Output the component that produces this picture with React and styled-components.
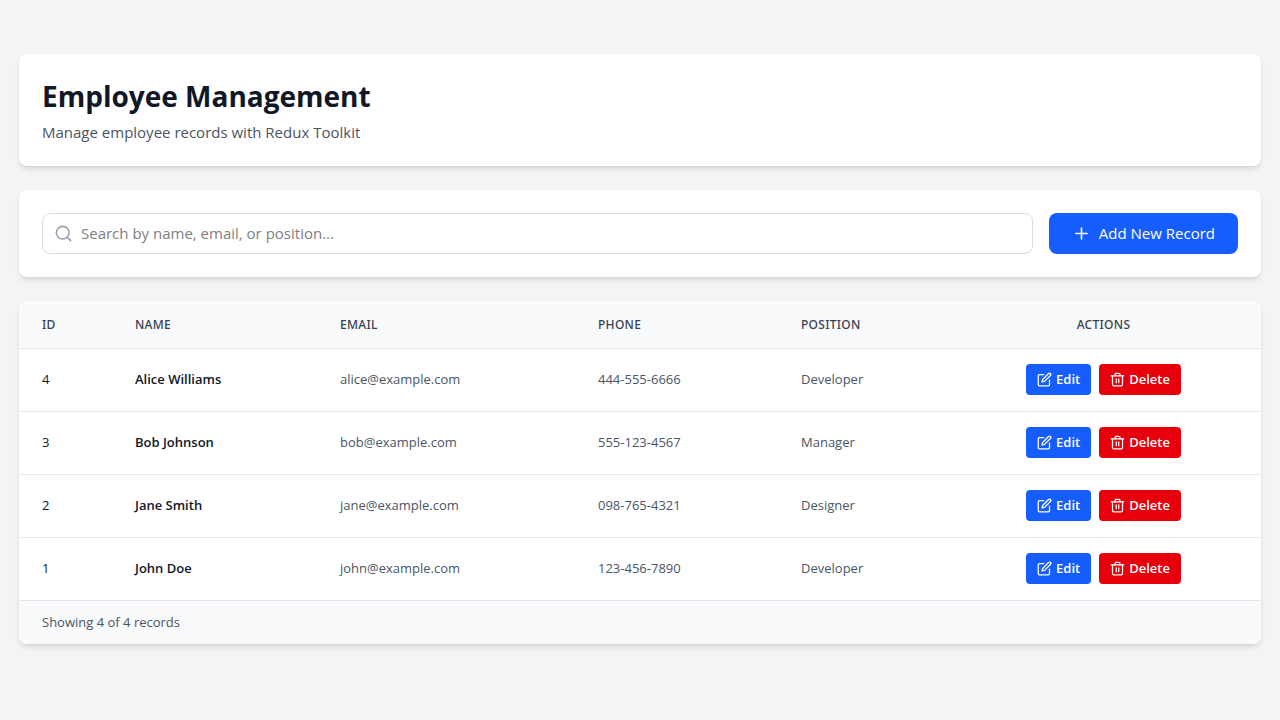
import React, { useState } from 'react';
import styled, { createGlobalStyle } from 'styled-components';

const colors = {
    page: '#f3f4f6',
    card: '#ffffff',
    soft: '#f9fafb',
    line: '#e5e7eb',
    inputLine: '#d9dce1',
    heading: '#101828',
    label: '#364153',
    text: '#4a5565',
    muted: '#99a1af',
    blue: '#155dfc',
    red: '#e7000b',
};

const GlobalStyle = createGlobalStyle`
    *, *::before, *::after {
        box-sizing: border-box;
    }

    body {
        margin: 0;
        background: ${colors.page};
        font-family: 'Open Sans', 'Noto Sans', sans-serif;
        font-size: 13px;
        line-height: 19px;
        color: ${colors.text};
    }

    button, input {
        font-family: inherit;
    }
`;

const Page = styled.main`
    display: flex;
    flex-direction: column;
    gap: 24px;
    min-height: 100vh;
    padding: 54px 19px;
`;

const Card = styled.section`
    background: ${colors.card};
    border-radius: 8px;
    box-shadow: 0 4px 6px -1px rgba(0, 0, 0, 0.1), 0 2px 4px -2px rgba(0, 0, 0, 0.1);
`;

const HeaderCard = styled(Card)`
    padding: 23px;
`;

const Title = styled.h1`
    margin: 0 0 6px;
    font-size: 28px;
    line-height: 39px;
    font-weight: 700;
    color: ${colors.heading};
`;

const Subtitle = styled.p`
    margin: 0;
    font-size: 15px;
    line-height: 21px;
`;

const Toolbar = styled(Card)`
    display: flex;
    gap: 16px;
    padding: 23px;
`;

const SearchBox = styled.label`
    display: flex;
    flex: 1;
    align-items: center;
    gap: 8px;
    height: 41px;
    padding: 0 11px;
    border: 1px solid ${colors.inputLine};
    border-radius: 8px;
    color: ${colors.muted};
`;

const SearchInput = styled.input`
    flex: 1;
    min-width: 0;
    padding: 0;
    border: 0;
    outline: 0;
    background: transparent;
    font-size: 15px;
    line-height: 21px;
    color: ${colors.heading};

    &::placeholder {
        color: #808080;
        opacity: 1;
    }
`;

const AddButton = styled.button`
    display: flex;
    align-items: center;
    gap: 8px;
    height: 41px;
    padding: 0 23px;
    border: 0;
    border-radius: 8px;
    background: ${colors.blue};
    color: #ffffff;
    font-size: 15px;
    line-height: 21px;
    white-space: nowrap;
    cursor: pointer;
`;

const TableCard = styled(Card)`
    overflow: hidden;
`;

const Table = styled.table`
    width: 100%;
    table-layout: fixed;
    border-collapse: collapse;
`;

const Column = styled.col`
    width: ${({ $width }) => $width}px;
`;

const HeadCell = styled.th`
    height: 47px;
    padding: 0 23px;
    background: ${colors.soft};
    font-family: 'Noto Sans', sans-serif;
    font-size: 12px;
    line-height: 17px;
    font-weight: 500;
    letter-spacing: 0.025em;
    text-align: ${({ $center }) => ($center ? 'center' : 'left')};
    text-transform: uppercase;
    color: ${colors.label};
`;

const Row = styled.tr`
    border-top: 1px solid ${colors.line};
`;

const Cell = styled.td`
    height: 63px;
    padding: 0 23px;
    font-weight: ${({ $strong }) => ($strong ? 600 : 400)};
    color: ${({ $dark }) => ($dark ? colors.heading : colors.text)};
    white-space: nowrap;
`;

const Actions = styled.div`
    display: flex;
    justify-content: center;
    gap: 8px;
`;

const ActionButton = styled.button`
    display: flex;
    align-items: center;
    gap: 4px;
    height: 31px;
    padding: 0 11px;
    border: 0;
    border-radius: 4px;
    background: ${({ $color }) => $color};
    color: #ffffff;
    font-size: 13px;
    line-height: 19px;
    font-weight: 600;
    cursor: pointer;
`;

const TableFooter = styled.footer`
    padding: 12px 23px;
    border-top: 1px solid ${colors.line};
    background: ${colors.soft};
`;

const Icon = styled.svg.attrs({
    viewBox: '0 0 24 24',
    fill: 'none',
    stroke: 'currentColor',
    strokeWidth: 2,
    strokeLinecap: 'round',
    strokeLinejoin: 'round',
    'aria-hidden': true,
})`
    flex: none;
    width: ${({ $size }) => $size}px;
    height: ${({ $size }) => $size}px;
`;

const SearchIcon = () => (
    <Icon $size={19}>
        <circle cx='11' cy='11' r='8' />
        <path d='m21 21-4.350-4.350' />
    </Icon>
);

const PlusIcon = () => (
    <Icon $size={19}>
        <path d='M12 5v14M5 12h14' />
    </Icon>
);

const EditIcon = () => (
    <Icon $size={15}>
        <path d='M11 4H4a2 2 0 0 0-2 2v14a2 2 0 0 0 2 2h14a2 2 0 0 0 2-2v-7' />
        <path d='M18.5 2.5a2.121 2.121 0 0 1 3 3L12 15l-4 1 1-4z' />
    </Icon>
);

const TrashIcon = () => (
    <Icon $size={15}>
        <path d='M2 6h20' />
        <path d='M20 6v14a2 2 0 0 1-2 2H6a2 2 0 0 1-2-2V6' />
        <path d='M8 6V4a2 2 0 0 1 2-2h4a2 2 0 0 1 2 2v2' />
        <path d='M10 11v6M14 11v6' />
    </Icon>
);

const columnWidths = [93, 205, 258, 203, 168, 315];

const initialEmployees = [
    { id: 4, name: 'Alice Williams', email: 'alice@example.com', phone: '444-555-6666', position: 'Developer' },
    { id: 3, name: 'Bob Johnson', email: 'bob@example.com', phone: '555-123-4567', position: 'Manager' },
    { id: 2, name: 'Jane Smith', email: 'jane@example.com', phone: '098-765-4321', position: 'Designer' },
    { id: 1, name: 'John Doe', email: 'john@example.com', phone: '123-456-7890', position: 'Developer' },
];

function EmployeeRow({ employee, onDelete }) {
    const { id, name, email, phone, position } = employee;

    return (
        <Row>
            <Cell $dark>{id}</Cell>
            <Cell $dark $strong>{name}</Cell>
            <Cell>{email}</Cell>
            <Cell>{phone}</Cell>
            <Cell>{position}</Cell>
            <Cell>
                <Actions>
                    <ActionButton type='button' $color={colors.blue}>
                        <EditIcon />
                        Edit
                    </ActionButton>
                    <ActionButton type='button' $color={colors.red} onClick={() => onDelete(id)}>
                        <TrashIcon />
                        Delete
                    </ActionButton>
                </Actions>
            </Cell>
        </Row>
    );
}

function App() {
    const [employees, setEmployees] = useState(initialEmployees);
    const [search, setSearch] = useState('');

    const handleSearch = (event) => {
        setSearch(event.target.value);
    };

    const handleDelete = (id) => {
        setEmployees(employees.filter((employee) => employee.id !== id));
    };

    const visible = employees.filter(({ name, email, position }) =>
        [name, email, position].some((value) => value.toLowerCase().includes(search.toLowerCase()))
    );

    return (
        <>
            <GlobalStyle />
            <Page>
                <HeaderCard as='header'>
                    <Title>Employee Management</Title>
                    <Subtitle>Manage employee records with Redux Toolkit</Subtitle>
                </HeaderCard>
                <Toolbar>
                    <SearchBox htmlFor='search'>
                        <SearchIcon />
                        <SearchInput
                            id='search'
                            type='text'
                            aria-label='Search'
                            placeholder='Search by name, email, or position...'
                            value={search}
                            onChange={handleSearch}
                        />
                    </SearchBox>
                    <AddButton type='button'>
                        <PlusIcon />
                        Add New Record
                    </AddButton>
                </Toolbar>
                <TableCard>
                    <Table>
                        <colgroup>
                            {columnWidths.map((width, index) => (
                                <Column key={index} $width={width} />
                            ))}
                        </colgroup>
                        <thead>
                            <tr>
                                <HeadCell>ID</HeadCell>
                                <HeadCell>Name</HeadCell>
                                <HeadCell>Email</HeadCell>
                                <HeadCell>Phone</HeadCell>
                                <HeadCell>Position</HeadCell>
                                <HeadCell $center>Actions</HeadCell>
                            </tr>
                        </thead>
                        <tbody>
                            {visible.map((employee) => (
                                <EmployeeRow key={employee.id} employee={employee} onDelete={handleDelete} />
                            ))}
                        </tbody>
                    </Table>
                    <TableFooter>
                        Showing {visible.length} of {employees.length} records
                    </TableFooter>
                </TableCard>
            </Page>
        </>
    );
}

export default App;
